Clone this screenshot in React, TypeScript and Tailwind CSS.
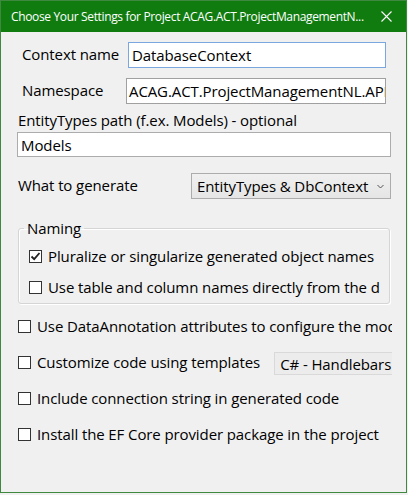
import React from "react";

const font = { fontFamily: '"Segoe UI", "Open Sans", "Noto Sans", sans-serif' };

function Box({ checked = false }: { checked?: boolean }) {
  return (
    <div className="w-[13px] h-[13px] shrink-0 border border-[#333333] bg-white flex items-center justify-center">
      {checked && (
        <svg width="11" height="11" viewBox="0 0 11 11">
          <path d="M1.5 5.5 L4.2 8.2 L9.5 2" fill="none" stroke="#222" strokeWidth="1.8" />
        </svg>
      )}
    </div>
  );
}

export default function App() {
  return (
    <div className="w-[408px] h-[495px] bg-[#f0f0f0]" style={font}>
      <div className="w-[407px] h-[493px] border border-[#3f883f] flex flex-col bg-[#f0f0f0] text-black">
        <div className="h-[31px] shrink-0 bg-[#107c10] flex items-center pl-[10px] pr-[10px] text-white text-[12px] tracking-[-0.35px]">
          <div className="flex-1 whitespace-nowrap overflow-hidden">Choose Your Settings for Project ACAG.ACT.ProjectManagementN...</div>
          <svg width="11" height="11" viewBox="0 0 11 11" className="mr-[4px] shrink-0">
            <path d="M0.5 0.5 L10.5 10.5 M10.5 0.5 L0.5 10.5" stroke="white" strokeWidth="1.1" />
          </svg>
        </div>
        <div className="flex-1 flex flex-col text-[15px] leading-[20px] tracking-[-0.1px]">
          <div className="mt-[10px] h-[26px] flex items-center">
            <div className="pl-[21px] w-[127px] mb-[3px]">Context name</div>
            <div className="w-[258px] h-[26px] border border-[#7aa7e0] bg-white flex items-center pl-[3px]">DatabaseContext</div>
          </div>
          <div className="mt-[10px] h-[26px] flex items-center">
            <div className="pl-[21px] w-[125px] mb-[3px]">Namespace</div>
            <div className="w-[260px] h-[26px] border border-[#a0a0a0] bg-white flex items-center pl-[2px] overflow-hidden whitespace-nowrap">ACAG.ACT.ProjectManagementNL.API</div>
          </div>
          <div className="mt-[6px] pl-[17px]">EntityTypes path (f.ex. Models) - optional</div>
          <div className="mt-[2px] ml-[16px] w-[374px] h-[25px] border border-[#acacac] bg-white flex items-center pl-[3px]">Models</div>
          <div className="mt-[16px] h-[26px] flex items-center">
            <div className="pl-[17px] w-[190px] mb-[3px]">What to generate</div>
            <div className="w-[200px] h-[26px] border border-[#acacac] bg-gradient-to-b from-[#f0f0f0] to-[#e5e5e5] flex items-center pl-[5px] pr-[6px]">
              <span className="flex-1 whitespace-nowrap">EntityTypes &amp; DbContext</span>
              <svg width="7" height="5" viewBox="0 0 7 5">
                <path d="M0.5 1 L3.5 4 L6.5 1" fill="none" stroke="#555" strokeWidth="1" />
              </svg>
            </div>
          </div>
          <fieldset className="mt-[19px] ml-[17px] w-[372px] border border-[#d5d5d5] rounded-[3px] pb-[6px] shadow-[inset_1px_1px_0_#ffffff,1px_1px_0_#ffffff]">
            <legend className="ml-[5px] px-[3px] leading-[20px]">Naming</legend>
            <div className="mt-[8px] ml-[10px] h-[20px] flex items-center gap-[6px] overflow-hidden whitespace-nowrap w-[351px]">
              <Box checked />
              <span>Pluralize or singularize generated object names</span>
            </div>
            <div className="mt-[11px] ml-[10px] h-[20px] flex items-center gap-[6px] overflow-hidden whitespace-nowrap w-[351px]">
              <Box />
              <span>Use table and column names directly from the database</span>
            </div>
          </fieldset>
          <div className="mt-[4px] pl-[17px] w-[391px] overflow-hidden">
            <div className="h-[36px] flex items-center gap-[6px] whitespace-nowrap">
              <Box />
              <span>Use DataAnnotation attributes to configure the model</span>
            </div>
            <div className="h-[36px] flex items-center gap-[6px] whitespace-nowrap">
              <Box />
              <span>Customize code using templates</span>
              <div className="ml-[8px] mt-[3px] w-[140px] h-[23px] shrink-0 border border-[#d9d9d9] bg-[#ececec] flex items-center pl-[5px]">C# - Handlebars</div>
            </div>
            <div className="h-[36px] flex items-center gap-[6px] whitespace-nowrap">
              <Box />
              <span>Include connection string in generated code</span>
            </div>
            <div className="h-[36px] flex items-center gap-[6px] whitespace-nowrap">
              <Box />
              <span>Install the EF Core provider package in the project</span>
            </div>
          </div>
        </div>
      </div>
    </div>
  );
}
